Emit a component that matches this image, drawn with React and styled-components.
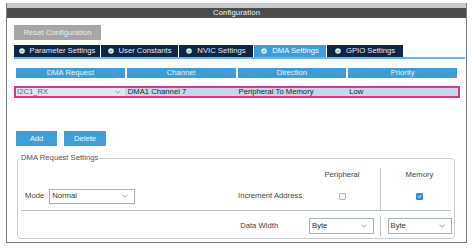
import React from 'react';
import styled, { createGlobalStyle } from 'styled-components';

const Global = createGlobalStyle`
  html, body { margin: 0; padding: 0; background: #ffffff; }
  body { font-family: "Liberation Sans", Arial, sans-serif; }
  * { box-sizing: border-box; }
`;

const Frame = styled.div`
  margin: 3px 0 0 6px;
  width: 461px;
  height: 240px;
  border: 1px solid #7b818b;
  border-top: none;
  display: flex;
  flex-direction: column;
  font-size: 7.7px;
  line-height: 1;
  color: #333;
`;

const TitleBar = styled.div`
  height: 15px;
  border-top: 5px solid #c6c9ce;
  background: #4c4c4c;
  color: #f2f2f2;
  display: flex;
  align-items: center;
  justify-content: center;
  letter-spacing: 0.1px;
`;

const Body = styled.div`
  flex: 1;
  display: flex;
  flex-direction: column;
  padding: 0 1px 3px 7px;
`;

const ResetButton = styled.div`
  margin-top: 7px;
  width: 87px;
  height: 15px;
  background: #a6a6a6;
  color: #ececec;
  display: flex;
  align-items: center;
  justify-content: center;
`;

const TabStrip = styled.div`
  margin-top: 5px;
  height: 14px;
  display: flex;
  gap: 1px;
  border-bottom: 2px solid #6cb5e4;
`;

const Tab = styled.div`
  width: ${p => p.$w}px;
  height: 12px;
  background: ${p => (p.$active ? '#3e9cd8' : '#0b2647')};
  color: ${p => (p.$active ? '#f4f9fd' : '#e4ebf3')};
  display: flex;
  align-items: center;
  justify-content: center;
  gap: 5px;
  white-space: nowrap;
`;

const HeaderGrid = styled.div`
  margin: 9px 0 0 2px;
  width: 441px;
  height: 10px;
  display: grid;
  grid-template-columns: repeat(4, 1fr);
  gap: 2px;
`;

const HeaderCell = styled.div`
  background: #3d9dd9;
  color: #e8f3fb;
  display: flex;
  align-items: center;
  justify-content: center;
`;

const DataRow = styled.div`
  margin-top: 8px;
  width: 446px;
  height: 12px;
  border: 2px solid #d8368c;
  background: #c6d5e8;
  display: grid;
  grid-template-columns: repeat(4, 1fr);
  gap: 2px;
  padding-right: 1px;
`;

const DataCell = styled.div`
  display: flex;
  align-items: center;
  padding-left: 1px;
  color: #1f1f1f;
  white-space: nowrap;
`;

const RowSelect = styled.div`
  display: flex;
  align-items: center;
  justify-content: space-between;
  background: #e1e7ef;
  color: #5a6272;
  padding: 0 4px 0 1px;
`;

const ButtonBar = styled.div`
  margin: 33px 0 0 2px;
  display: flex;
  gap: 7px;
`;

const BlueButton = styled.div`
  width: ${p => p.$w}px;
  height: 15px;
  background: #3e9fdb;
  color: #f2f8fc;
  display: flex;
  align-items: center;
  justify-content: center;
`;

const FieldSet = styled.fieldset`
  margin: 7px 10px 0 3px;
  padding: 5px 3px 0 3px;
  border: 1px solid #c9cdd3;
  border-radius: 4px;
  min-width: 0;
  flex: 1;
`;

const Legend = styled.legend`
  padding: 0 1px;
  margin-left: -1px;
  color: #555;
  font-size: 7.7px;
  line-height: 10px;
`;

const SettingsRow = styled.div`
  display: grid;
  grid-template-columns: 217px 67px 75px 72px;
  height: ${p => p.$h}px;
  ${p => (p.$line ? 'border-bottom: 1px solid #b9c3d7;' : '')}
  padding-top: ${p => p.$pt || 0}px;
`;

const Cell = styled.div`
  display: flex;
  align-items: center;
  justify-content: ${p => (p.$center ? 'center' : 'flex-start')};
  color: #444;
  white-space: nowrap;
  ${p => p.$divider ? 'border-left: 1px solid #b9c3d7; padding-left: 6px;' : ''}
  ${p => p.$shift ? 'padding-right: 1px;' : ''}
`;

const ModeLabel = styled.span`
  margin-left: 4px;
  margin-right: 5px;
  color: #444;
`;

const Select = styled.div`
  width: ${p => p.$w}px;
  height: ${p => p.$h || 16}px;
  border: 1px solid #aab0b9;
  background: #fff;
  display: flex;
  align-items: center;
  justify-content: space-between;
  padding: 0 6px 0 2px;
  color: #333;
  margin-left: ${p => p.$ml || 0}px;
`;

const CheckBox = styled.div`
  width: 7px;
  height: 7px;
  border: 1px solid ${p => (p.$checked ? '#2e8fd8' : '#b4b8be')};
  background: ${p => (p.$checked ? '#2e8fd8' : '#fafafa')};
  border-radius: 1px;
  display: flex;
  align-items: center;
  justify-content: center;
`;

const Chevron = () => (
  <svg width="6" height="4" viewBox="0 0 6 4">
    <polyline points="0.5,0.7 3,3.2 5.5,0.7" fill="none" stroke="#8a8f96" strokeWidth="0.8" />
  </svg>
);

const TabIcon = () => (
  <svg width="6" height="6" viewBox="0 0 6 6">
    <circle cx="3" cy="3" r="2.8" fill="#d7efe1" />
    <polyline points="1.7,3.1 2.6,4 4.3,2.1" fill="none" stroke="#3d8f61" strokeWidth="0.8" />
  </svg>
);

const Tick = () => (
  <svg width="5" height="5" viewBox="0 0 5 5">
    <polyline points="0.8,2.6 2,3.8 4.2,1.2" fill="none" stroke="#fff" strokeWidth="1" />
  </svg>
);

const tabs = [
  { label: 'Parameter Settings', w: 86 },
  { label: 'User Constants', w: 77 },
  { label: 'NVIC Settings', w: 74 },
  { label: 'DMA Settings', w: 72, active: true },
  { label: 'GPIO Settings', w: 76 },
];

export default function App() {
  return (
    <>
      <Global />
      <Frame>
        <TitleBar>Configuration</TitleBar>
        <Body>
          <ResetButton>Reset Configuration</ResetButton>
          <TabStrip>
            {tabs.map(t => (
              <Tab key={t.label} $w={t.w} $active={t.active}>
                <TabIcon />
                <span>{t.label}</span>
              </Tab>
            ))}
          </TabStrip>
          <HeaderGrid>
            <HeaderCell>DMA Request</HeaderCell>
            <HeaderCell>Channel</HeaderCell>
            <HeaderCell>Direction</HeaderCell>
            <HeaderCell>Priority</HeaderCell>
          </HeaderGrid>
          <DataRow>
            <RowSelect>
              <span>I2C1_RX</span>
              <Chevron />
            </RowSelect>
            <DataCell>DMA1 Channel 7</DataCell>
            <DataCell>Peripheral To Memory</DataCell>
            <DataCell>Low</DataCell>
          </DataRow>
          <ButtonBar>
            <BlueButton $w={41}>Add</BlueButton>
            <BlueButton $w={42}>Delete</BlueButton>
          </ButtonBar>
          <FieldSet>
            <Legend>DMA Request Settings</Legend>
            <SettingsRow $h={14}>
              <Cell />
              <Cell />
              <Cell $center $shift>Peripheral</Cell>
              <Cell $center $divider>Memory</Cell>
            </SettingsRow>
            <SettingsRow $h={29} $line>
              <Cell>
                <ModeLabel>Mode</ModeLabel>
                <Select $w={86} $h={15}>
                  <span>Normal</span>
                  <Chevron />
                </Select>
              </Cell>
              <Cell>Increment Address</Cell>
              <Cell $center $shift><CheckBox /></Cell>
              <Cell $center $divider><CheckBox $checked><Tick /></CheckBox></Cell>
            </SettingsRow>
            <SettingsRow $h={25} $pt={5}>
              <Cell />
              <Cell>&nbsp;Data Width</Cell>
              <Cell>
                <Select $w={65} $ml={4}>
                  <span>Byte</span>
                  <Chevron />
                </Select>
              </Cell>
              <Cell $center $divider>
                <Select $w={64}>
                  <span>Byte</span>
                  <Chevron />
                </Select>
              </Cell>
            </SettingsRow>
          </FieldSet>
        </Body>
      </Frame>
    </>
  );
}
